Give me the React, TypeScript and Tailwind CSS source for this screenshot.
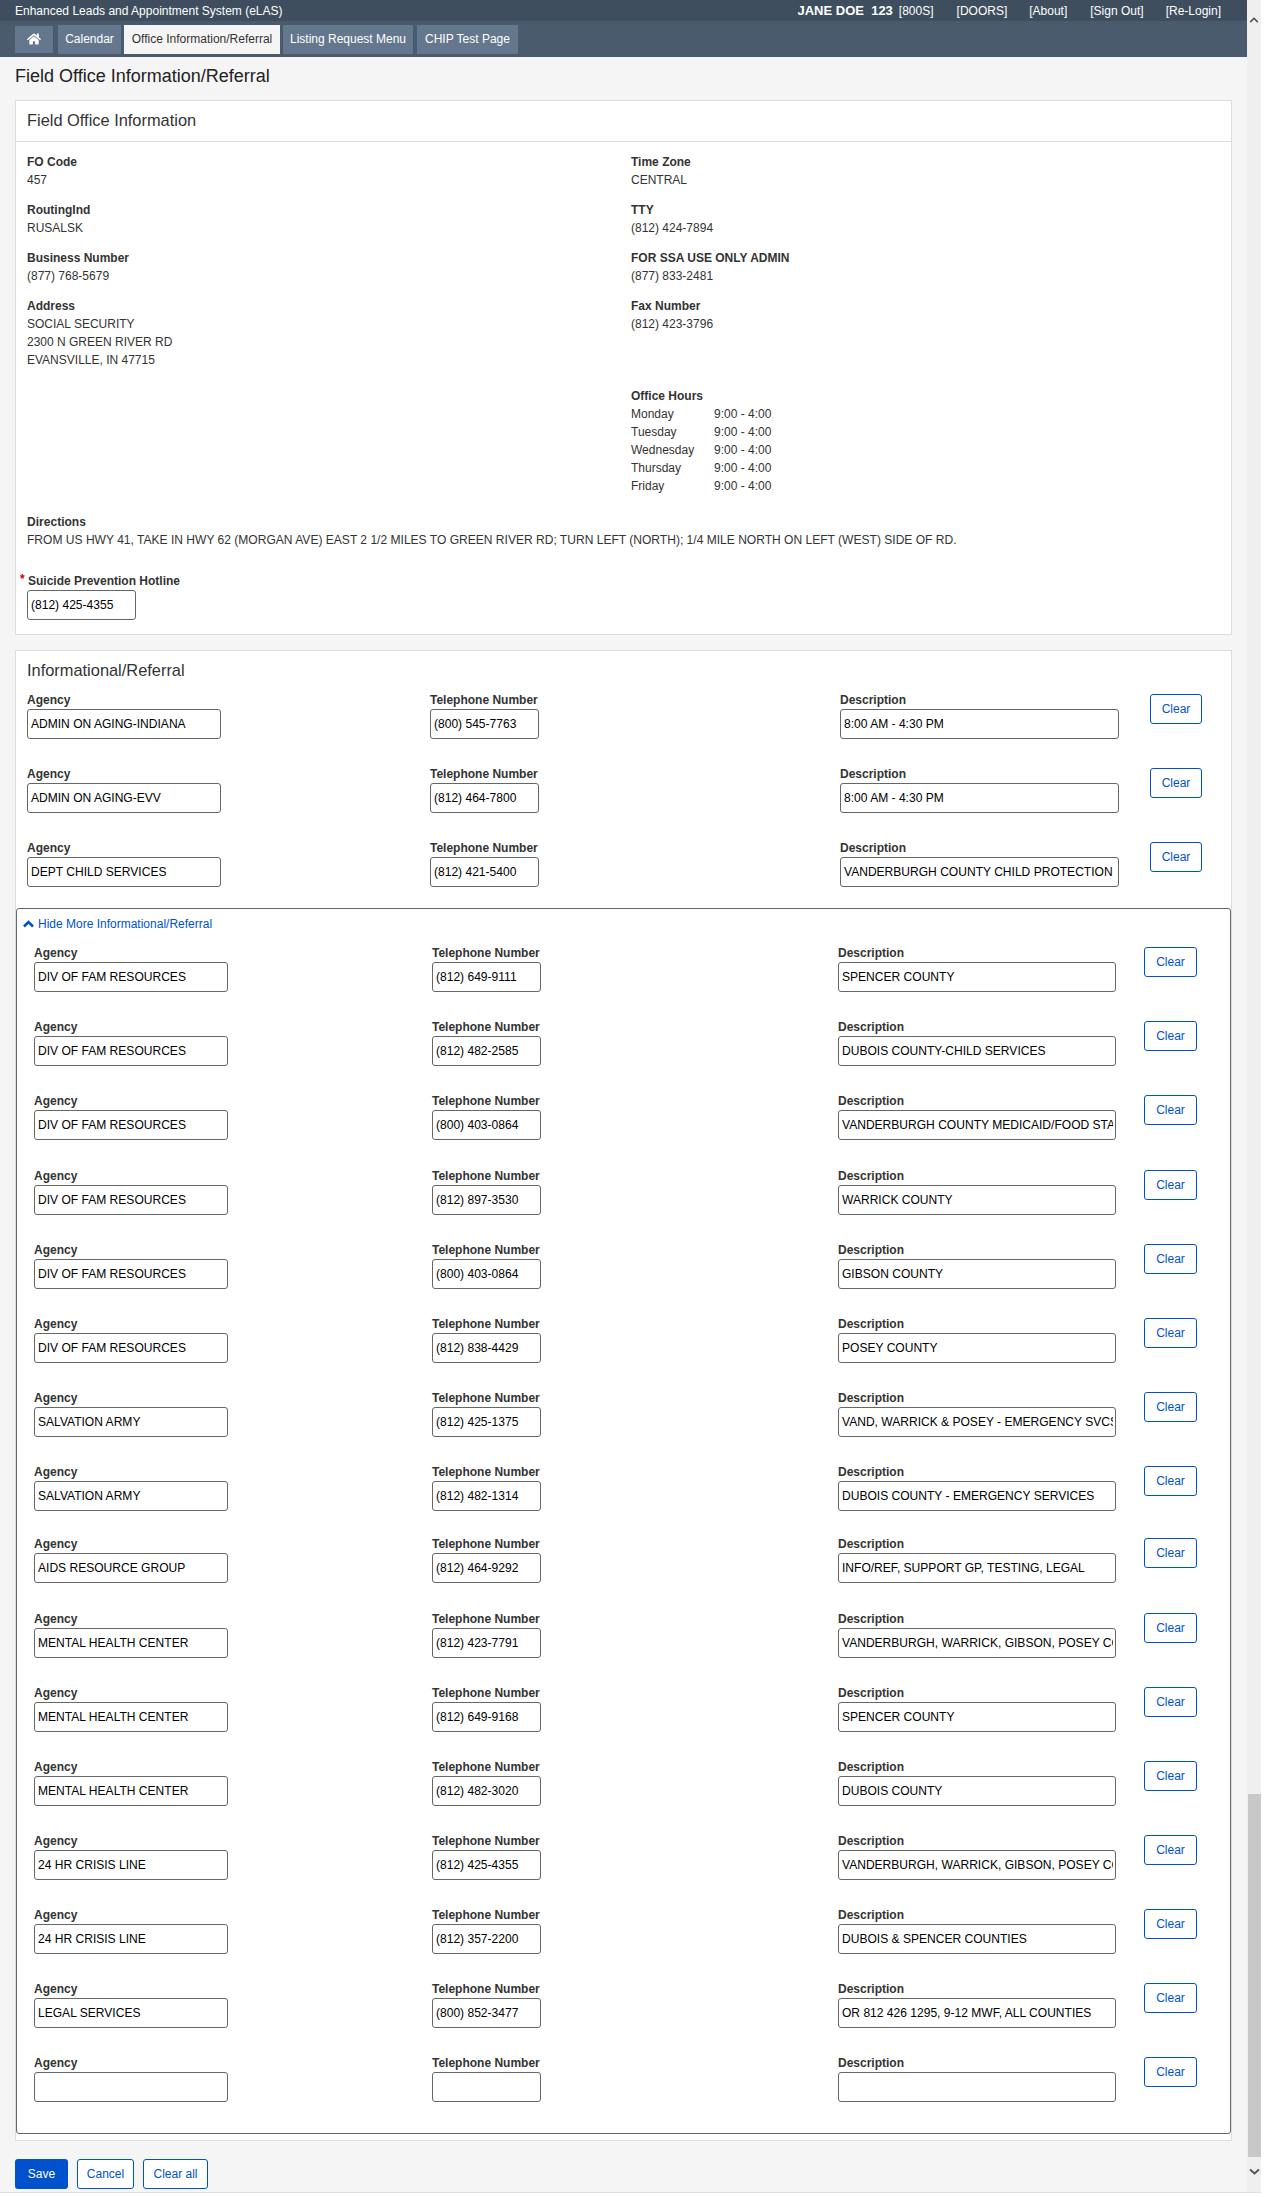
import React from 'react';
import { FaHome, FaChevronUp } from 'react-icons/fa';

type Entry = { agency: string; phone: string; desc: string; gap?: string };

const MAIN_ROWS: Entry[] = [
  { agency: 'ADMIN ON AGING-INDIANA', phone: '(800) 545-7763', desc: '8:00 AM - 4:30 PM' },
  { agency: 'ADMIN ON AGING-EVV', phone: '(812) 464-7800', desc: '8:00 AM - 4:30 PM' },
  { agency: 'DEPT CHILD SERVICES', phone: '(812) 421-5400', desc: 'VANDERBURGH COUNTY CHILD PROTECTION', gap: 'mb-0' },
];

const MORE_ROWS: Entry[] = [
  { agency: 'DIV OF FAM RESOURCES', phone: '(812) 649-9111', desc: 'SPENCER COUNTY' },
  { agency: 'DIV OF FAM RESOURCES', phone: '(812) 482-2585', desc: 'DUBOIS COUNTY-CHILD SERVICES' },
  { agency: 'DIV OF FAM RESOURCES', phone: '(800) 403-0864', desc: 'VANDERBURGH COUNTY MEDICAID/FOOD STAMPS', gap: 'mb-[30px]' },
  { agency: 'DIV OF FAM RESOURCES', phone: '(812) 897-3530', desc: 'WARRICK COUNTY' },
  { agency: 'DIV OF FAM RESOURCES', phone: '(800) 403-0864', desc: 'GIBSON COUNTY' },
  { agency: 'DIV OF FAM RESOURCES', phone: '(812) 838-4429', desc: 'POSEY COUNTY' },
  { agency: 'SALVATION ARMY', phone: '(812) 425-1375', desc: 'VAND, WARRICK & POSEY - EMERGENCY SVCS' },
  { agency: 'SALVATION ARMY', phone: '(812) 482-1314', desc: 'DUBOIS COUNTY - EMERGENCY SERVICES', gap: 'mb-[27px]' },
  { agency: 'AIDS RESOURCE GROUP', phone: '(812) 464-9292', desc: 'INFO/REF, SUPPORT GP, TESTING, LEGAL', gap: 'mb-[30px]' },
  { agency: 'MENTAL HEALTH CENTER', phone: '(812) 423-7791', desc: 'VANDERBURGH, WARRICK, GIBSON, POSEY COUNTIES' },
  { agency: 'MENTAL HEALTH CENTER', phone: '(812) 649-9168', desc: 'SPENCER COUNTY' },
  { agency: 'MENTAL HEALTH CENTER', phone: '(812) 482-3020', desc: 'DUBOIS COUNTY' },
  { agency: '24 HR CRISIS LINE', phone: '(812) 425-4355', desc: 'VANDERBURGH, WARRICK, GIBSON, POSEY COUNTIES' },
  { agency: '24 HR CRISIS LINE', phone: '(812) 357-2200', desc: 'DUBOIS & SPENCER COUNTIES' },
  { agency: 'LEGAL SERVICES', phone: '(800) 852-3477', desc: 'OR 812 426 1295, 9-12 MWF, ALL COUNTIES' },
  { agency: '', phone: '', desc: '', gap: 'mb-0' },
];

const HOURS = ['Monday', 'Tuesday', 'Wednesday', 'Thursday', 'Friday'];

const Label = ({ children }: { children: React.ReactNode }) => (
  <div className="h-[15px] text-[12px] leading-[13px] font-bold text-[#333]">{children}</div>
);

const Input = ({ value, className }: { value: string; className: string }) => (
  <input
    readOnly
    value={value}
    className={`block h-[30px] border border-[#666] rounded-[3px] bg-white pl-[3px] pr-[2px] text-[12.05px] text-black outline-none ${className}`}
  />
);

const OutlineButton = ({ label, className }: { label: string; className: string }) => (
  <button className={`border border-[#0052cc] rounded-[3px] bg-white text-[12px] text-[#0052cc] ${className}`}>
    {label}
  </button>
);

const Row = ({ row, more }: { row: Entry; more?: boolean }) => (
  <div
    className={`grid ${more ? 'grid-cols-[398px_406px_306px_53px]' : 'grid-cols-[403px_410px_310px_52px]'} ${row.gap ?? 'mb-[29px]'}`}
  >
    <div>
      <Label>Agency</Label>
      <Input value={row.agency} className="w-[194px]" />
    </div>
    <div>
      <Label>Telephone Number</Label>
      <Input value={row.phone} className="w-[109px]" />
    </div>
    <div>
      <Label>Description</Label>
      <Input value={row.desc} className={more ? 'w-[278px]' : 'w-[279px]'} />
    </div>
    <OutlineButton label="Clear" className="w-full h-[30px]" />
  </div>
);

const Info = ({ label, lines, className }: { label: string; lines: string[]; className?: string }) => (
  <div className={className ?? 'mb-[12px]'}>
    <div className="font-bold text-[#333]">{label}</div>
    {lines.map((line) => (
      <div key={line}>{line}</div>
    ))}
  </div>
);

const NavTab = ({ label, className, active }: { label: string; className: string; active?: boolean }) => (
  <div
    className={`h-[29px] flex items-center justify-center text-[12px] ${className} ${
      active ? 'bg-[#f5f5f5] text-[#333]' : 'bg-[#64778d] text-white'
    }`}
  >
    {label}
  </div>
);

export default function App() {
  return (
    <div className="flex w-[1269px] h-[2197px] bg-white font-['Liberation_Sans',Arial,sans-serif] text-[12px] text-[#333] overflow-hidden">
      <div className="w-[1247px] h-[2193px] bg-[#f5f5f5] border-b border-[#ddd]">
        {/* Top bar */}
        <div className="h-[21px] bg-[#3e4e5e] flex items-center justify-between pl-[15px] text-white text-[12px]">
          <span>Enhanced Leads and Appointment System (eLAS)</span>
          <div className="flex items-center">
            <span className="font-bold text-[13px] mr-[6px]">JANE DOE&nbsp;&nbsp;123</span>
            <span className="mr-[23px]">[800S]</span>
            <span className="mr-[22px]">[DOORS]</span>
            <span className="mr-[23px]">[About]</span>
            <span className="mr-[22px]">[Sign Out]</span>
            <span className="mr-[26px]">[Re-Login]</span>
          </div>
        </div>

        {/* Nav */}
        <div className="h-[36px] bg-[#4a5b6e] flex items-center pl-[15px]">
          <div className="w-[38px] h-[27px] mr-[5px] bg-[#64778d] flex items-center justify-center text-white">
            <FaHome size={14} />
          </div>
          <NavTab label="Calendar" className="w-[63px] mr-[3px]" />
          <NavTab label="Office Information/Referral" className="w-[156px] mr-[3px]" active />
          <NavTab label="Listing Request Menu" className="w-[130px] mr-[4px]" />
          <NavTab label="CHIP Test Page" className="w-[101px]" />
        </div>

        <div className="pl-[15px] w-[1232px]">
          <h1 className="h-[43px] pt-[8px] text-[18px] leading-[22px] text-[#222]">Field Office Information/Referral</h1>

          {/* Field office card */}
          <div className="h-[535px] bg-white border border-[#ddd]">
            <div className="h-[41px] border-b border-[#ddd] pl-[11px] pb-[2px] flex items-center text-[16.4px] text-[#333]">
              Field Office Information
            </div>
            <div className="pl-[11px] pt-[11px] leading-[18px] text-[#333]">
              <div className="grid grid-cols-[604px_1fr] h-[360px]">
                <div>
                  <Info label="FO Code" lines={['457']} />
                  <Info label="RoutingInd" lines={['RUSALSK']} />
                  <Info label="Business Number" lines={['(877) 768-5679']} />
                  <Info label="Address" lines={['SOCIAL SECURITY', '2300 N GREEN RIVER RD', 'EVANSVILLE, IN 47715']} />
                </div>
                <div>
                  <Info label="Time Zone" lines={['CENTRAL']} />
                  <Info label="TTY" lines={['(812) 424-7894']} />
                  <Info label="FOR SSA USE ONLY ADMIN" lines={['(877) 833-2481']} />
                  <Info label="Fax Number" lines={['(812) 423-3796']} className="mb-[54px]" />
                  <div className="font-bold">Office Hours</div>
                  {HOURS.map((day) => (
                    <div key={day} className="flex">
                      <span className="w-[83px]">{day}</span>
                      <span>9:00 - 4:00</span>
                    </div>
                  ))}
                </div>
              </div>
              <Info
                label="Directions"
                lines={['FROM US HWY 41, TAKE IN HWY 62 (MORGAN AVE) EAST 2 1/2 MILES TO GREEN RIVER RD; TURN LEFT (NORTH); 1/4 MILE NORTH ON LEFT (WEST) SIDE OF RD.']}
                className="mb-[23px] text-[12.05px]"
              />
              <div className="relative h-[18px] font-bold pl-[1px]">
                <span className="absolute left-[-7px] top-[-2px] text-[#c00]">*</span>
                Suicide Prevention Hotline
              </div>
              <Input value="(812) 425-4355" className="w-[109px]" />
            </div>
          </div>

          {/* Referral card */}
          <div className="mt-[15px] bg-white border border-[#ddd] h-[1491px]">
            <div className="h-[43px] pl-[11px] pt-[7px] text-[16.4px] leading-[24px] text-[#333]">Informational/Referral</div>
            <div className="pl-[11px]">
              {MAIN_ROWS.map((row) => (
                <Row key={row.agency} row={row} />
              ))}
            </div>
            <div className="mt-[21px] h-[1226px] w-[1215px] border border-[#666] rounded-[3px] pl-[17px]">
              <div className="flex items-center h-[30px] -ml-[11px] text-[#0052cc]">
                <svg width="11" height="8" viewBox="0 0 11 8" className="mr-[4px]">
                  <path d="M1 6.5 L5.5 2 L10 6.5" fill="none" stroke="#0052cc" strokeWidth="2.6" />
                </svg>
                <span>Hide More Informational/Referral</span>
              </div>
              <div className="mt-[8px]">
                {MORE_ROWS.map((row, i) => (
                  <Row key={i} row={row} more />
                ))}
              </div>
            </div>
          </div>

          {/* Actions */}
          <div className="flex mt-[18px]">
            <button className="w-[53px] h-[30px] rounded-[3px] bg-[#0052cc] text-white text-[12px] mr-[9px]">Save</button>
            <OutlineButton label="Cancel" className="w-[57px] h-[30px] mr-[9px]" />
            <OutlineButton label="Clear all" className="w-[65px] h-[30px]" />
          </div>
        </div>
      </div>

      {/* Scrollbar */}
      <div className="w-[14px] h-[2193px] bg-[#efefef] border-b border-[#ddd] flex flex-col items-center text-[#555]">
        <FaChevronUp size={10} className="mt-[15px]" />
        <div className="mt-auto w-[13px] h-[363px] bg-[#c8c8c8]" />
        <svg width="11" height="7" viewBox="0 0 11 7" className="mt-[11px] mb-[17px]">
          <path d="M1 1.5 L5.5 5.5 L10 1.5" fill="none" stroke="#555" strokeWidth="2" />
        </svg>
      </div>
    </div>
  );
}
